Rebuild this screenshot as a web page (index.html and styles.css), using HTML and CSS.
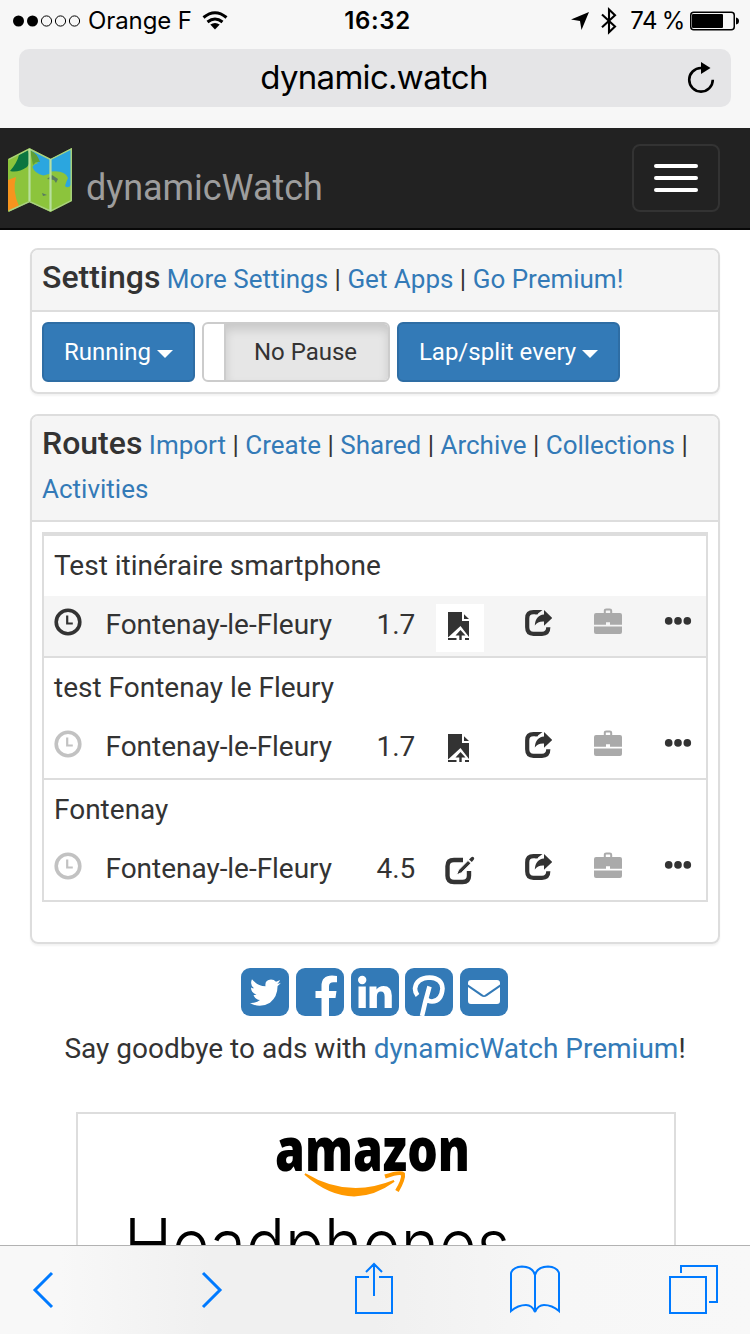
FILE: index.html
```
<!DOCTYPE html>
<html lang="en">
<head>
    <meta charset="UTF-8">
    <meta name="viewport" content="width=device-width, initial-scale=1.0">
    <title>dynamicWatch</title>
    <link rel="stylesheet" href="styles.css">
</head>
<body>
    <!-- icons used more than once -->
    <svg class="sprite">
        <symbol id="clock" viewBox="0 0 28 28">
            <circle cx="14" cy="14" r="11.800" fill="none" stroke="currentColor" stroke-width="3.600"/>
            <path d="M13.200 7.500v8h5.600" fill="none" stroke="currentColor" stroke-width="2.200"/>
        </symbol>
        <symbol id="share" viewBox="0 0 28 28">
            <path d="M14 4.200H9.500Q3.200 4.200 3.200 10.400V19.300Q3.200 25.800 9.500 25.800H18Q24.300 25.800 24.300 19.300" fill="none" stroke="currentColor" stroke-width="4.200"/>
            <path d="M12.500 2.100h6l-5.500 4.200h-2z"/>
            <path d="M20 2l8.300 8-8.300 7.700v-4.200c-4.500-.2-7 .8-9.200 4 .4-6.500 3.500-10.500 9.200-11z"/>
        </symbol>
        <symbol id="briefcase" viewBox="0 0 28 28">
            <path d="M10.800 6V2.800q0-1.400 1.400-1.400h3.600q1.400 0 1.400 1.400V6" fill="none" stroke="currentColor" stroke-width="2"/>
            <path d="M2 5h24q2 0 2 2v9.800H16v-2.500h-4v2.500H0V7q0-2 2-2z"/>
            <path d="M0 18.600h28v5.400q0 2-2 2H2q-2 0-2-2z"/>
        </symbol>
        <symbol id="dots" viewBox="0 0 28 28">
            <circle cx="4.700" cy="12.900" r="3.800"/>
            <circle cx="14" cy="12.900" r="3.800"/>
            <circle cx="23.300" cy="12.900" r="3.800"/>
        </symbol>
        <symbol id="map-file" viewBox="0 0 48 48">
            <path d="M12 8h14v9h7v16L24.500 22 12 33.500z"/>
            <path d="M28 10.200l5 4.800h-5z"/>
            <path d="M12 34h8.500v2H12zM29 34h4v2h-4z"/>
            <path d="M24.500 26l5 5.500h-3.800V36h-2.400v-4.500h-3.800z"/>
        </symbol>
    </svg>

    <header class="browser-top">
        <div class="status-bar">
            <div class="carrier">
                <svg width="68" height="12" viewBox="0 0 68 12">
                    <circle cx="5.500" cy="6" r="5.500"/>
                    <circle cx="19.500" cy="6" r="5.500"/>
                    <g fill="none" stroke="#000">
                        <circle cx="33.500" cy="6" r="5.100"/>
                        <circle cx="47.500" cy="6" r="5.100"/>
                        <circle cx="61.500" cy="6" r="5.100"/>
                    </g>
                </svg>
                <span class="carrier-name">Orange F</span>
                <svg class="wifi" width="26" height="19" viewBox="0 0 26 19">
                    <g fill="none" stroke="#000" stroke-width="3">
                        <path d="M1.500 6.500q11.500-9.500 23 0"/>
                        <path d="M5.500 11q7.500-6 15 0"/>
                    </g>
                    <path d="M8.300 13.600q4.700-3.400 9.400 0L13 18.500z"/>
                </svg>
            </div>
            <div class="time">16:32</div>
            <div class="indicators">
                <svg width="18" height="18" viewBox="0 0 18 18"><path d="M18 0L10.500 18 9 9 0 7.500z"/></svg>
                <svg class="bluetooth" width="16" height="28" viewBox="0 0 16 28">
                    <path d="M1 7.500l13 12-6 5.700V2.500l6 5.700-13 12" fill="none" stroke="#000" stroke-width="2.100"/>
                </svg>
                <span class="percent">74 %</span>
                <svg width="49" height="20" viewBox="0 0 49 20">
                    <rect x=".75" y="1.250" width="43.500" height="17.500" rx="3" fill="none" stroke="#000" stroke-width="1.500"/>
                    <rect x="2" y="3" width="31" height="14" rx="1"/>
                    <path d="M46 6.500q3 .5 3 3.500t-3 3.500z"/>
                </svg>
            </div>
        </div>
        <div class="address-bar">
            <span class="url">dynamic.watch</span>
            <svg class="reload" width="28" height="32" viewBox="0 0 28 32">
                <path d="M14.500 6H14A11.800 11.800 0 1 0 25.800 17.800" fill="none" stroke="#000" stroke-width="2.600"/>
                <path d="M14 0l9.500 6L14 12z"/>
            </svg>
        </div>
    </header>

    <nav class="navbar">
        <a class="brand" href="#">
            <svg width="64" height="64" viewBox="0 0 64 64">
                <path d="M0 11L21.500 0 42.500 11 64 0v53L42.500 64 21.500 54 0 64z" fill="#8cc43c"/>
                <path d="M22 1l20.500 11v13.500l-7 2q-9-2-11-8.500 1-3 6-4-4-1.500-4-5z" fill="#2ba6df"/>
                <path d="M43 11L63 1v36q-3 4-6 1 1-4 3-8-3-8-17-6.500z" fill="#2ba6df"/>
                <path d="M2 23Q9 15 11 7l9-5q4 12-1 17-9 6-17 4z" fill="#0b7540"/>
                <path d="M22 2q7 3 10 12-4-1-7 3z" fill="#5f9f35"/>
                <path d="M0 32l8-3q-4 14 3 29L0 63z" fill="#f7941e"/>
                <path d="M39 31l5-4 6 4-2 4-2-3zM34 45l5 2-4 1z" fill="#597b60"/>
                <path d="M.8 11.500L21.500 1 42.500 11.500 63.200 1v51.500L42.500 63 21.500 53.500.8 63" fill="none" stroke="#a9d080" stroke-width="1.400"/>
                <path d="M21.500 1v52M42.500 11v52" stroke="#b8dfa0" stroke-width="2.200"/>
            </svg>
            <span>dynamicWatch</span>
        </a>
        <button class="menu-toggle" aria-label="Menu">
            <i></i>
            <i></i>
            <i></i>
        </button>
    </nav>

    <main class="content">
        <section class="panel">
            <div class="panel-heading">
                <h2>Settings</h2>
                <a href="#">More Settings</a> |
                <a href="#">Get Apps</a> |
                <a href="#">Go Premium!</a>
            </div>
            <div class="panel-body buttons">
                <button class="btn btn-running">Running <span class="caret"></span></button>
                <div class="switch"><span>No Pause</span></div>
                <button class="btn btn-lap">Lap/split every <span class="caret"></span></button>
            </div>
        </section>

        <section class="panel routes">
            <div class="panel-heading">
                <h2>Routes</h2>
                <a href="#">Import</a> |
                <a href="#">Create</a> |
                <a href="#">Shared</a> |
                <a href="#">Archive</a> |
                <a href="#">Collections</a> |
                <a href="#">Activities</a>
            </div>
            <div class="panel-body">
                <div class="route-list">
                    <div class="route">
                        <div class="route-title">Test itinéraire smartphone</div>
                        <div class="route-row active">
                            <svg class="icon"><use href="#clock"/></svg>
                            <span>Fontenay-le-Fleury</span>
                            <span>1.7</span>
                            <svg class="icon-map"><use href="#map-file"/></svg>
                            <svg class="icon"><use href="#share"/></svg>
                            <svg class="icon muted"><use href="#briefcase"/></svg>
                            <svg class="icon"><use href="#dots"/></svg>
                        </div>
                    </div>
                    <div class="route">
                        <div class="route-title">test Fontenay le Fleury</div>
                        <div class="route-row">
                            <svg class="icon faded"><use href="#clock"/></svg>
                            <span>Fontenay-le-Fleury</span>
                            <span>1.7</span>
                            <svg class="icon-map"><use href="#map-file"/></svg>
                            <svg class="icon"><use href="#share"/></svg>
                            <svg class="icon muted"><use href="#briefcase"/></svg>
                            <svg class="icon"><use href="#dots"/></svg>
                        </div>
                    </div>
                    <div class="route">
                        <div class="route-title">Fontenay</div>
                        <div class="route-row">
                            <svg class="icon faded"><use href="#clock"/></svg>
                            <span>Fontenay-le-Fleury</span>
                            <span>4.5</span>
                            <svg class="icon-map" viewBox="0 0 48 48">
                                <path d="M27 12H18Q11.500 12 11.500 18.200V27.800Q11.500 34 18 34H26.500Q33 34 33 27.800V23" fill="none" stroke="currentColor" stroke-width="4.400"/>
                                <path d="M20.500 27l2-5 9.500-9.500 3 2.800-9.500 9.400z" stroke="#fff" stroke-width="1"/>
                                <path d="M33 11.500l2.300-2.200q1.300-1 2.400 0t0 2.500L35.800 14z"/>
                            </svg>
                            <svg class="icon"><use href="#share"/></svg>
                            <svg class="icon muted"><use href="#briefcase"/></svg>
                            <svg class="icon"><use href="#dots"/></svg>
                        </div>
                    </div>
                </div>
            </div>
        </section>

        <div class="social">
            <svg viewBox="0 0 48 48">
                <path d="M9 35q6 .4 10-3-5-.6-6.500-5 2 .2 3-.4-5.500-2-5.500-7.200 1.500.9 3 .9-4.500-3.600-2-9Q16.500 18 24.500 18.300 23.500 12 30 11.500q3 0 5 2.200 2-.4 4-1.600-.6 2.300-2.700 3.700 1.700-.1 3.500-1-1.300 2-3.200 3.300Q36.500 29 29 34.700 19 40.800 9 35z"/>
            </svg>
            <svg viewBox="0 0 48 48">
                <path d="M25.500 48V30h-6v-7h6v-5q0-10.500 10.500-10.500 2.500 0 5 .4v6.300h-3.500q-4.500 0-4.500 4V23h7.500l-1 7H33v18z"/>
            </svg>
            <svg viewBox="0 0 48 48">
                <circle cx="11.200" cy="12" r="4.200"/>
                <path d="M7.500 18.500h7.300V40H7.500zM18.500 18.500h7v3q2.300-3.600 7-3.600 8.300 0 8.300 9.600V40h-7.200V28.500q0-5-3.700-5-4 0-4 5V40h-7.400z"/>
            </svg>
            <svg viewBox="0 0 48 48">
                <path d="M12.500 27.500Q10 24.500 10 20.500 11.500 9.800 24.500 9.500 37 10 37.500 20.500 36.500 33 27 33.500q-4 0-5.800-3M24.500 18.500Q20 34 17 48" fill="none" stroke="#fff" stroke-width="4.600"/>
            </svg>
            <svg viewBox="0 0 48 48">
                <path d="M8 15q0-3 3-3h26q3 0 3 3v1.500L24 27.500 8 16.500z"/>
                <path d="M8 19l13 9q3 2 6 0l13-9v14q0 3-3 3H11q-3 0-3-3z"/>
            </svg>
        </div>
        <p class="premium">Say goodbye to ads with <a href="#">dynamicWatch Premium</a>!</p>

        <div class="ad">
            <svg width="596" height="180" viewBox="0 0 596 180">
                <text class="ad-logo" x="197" y="57" textLength="195" lengthAdjust="spacingAndGlyphs">amazon</text>
                <path d="M227 60Q270 86 316 67q-44 32-89-7z" fill="#ff9900" stroke="#ff9900" stroke-width="2"/>
                <path d="M307 62.500q15-5 18-2.500 1 5-6 17" fill="none" stroke="#ff9900" stroke-width="4"/>
                <text class="ad-title" x="46" y="156" textLength="386" lengthAdjust="spacingAndGlyphs">Headphones</text>
            </svg>
        </div>
    </main>

    <footer class="toolbar">
        <svg viewBox="0 0 52 52"><path d="M35 9L18 26l17 17"/></svg>
        <svg viewBox="0 0 52 52"><path d="M18 9l17 17-17 17"/></svg>
        <svg class="thin" viewBox="0 0 52 52"><path d="M22 13H9v36h36V13H32M27 32V0M19 8l8-8 8 8"/></svg>
        <svg class="thin" viewBox="0 0 52 52"><path d="M27 10v38Q24 41 18 41 10 41 3 47V9Q5 3 14 2.500 25 3 27 11 29 3 40 2.500q9 .5 11 6.500V47q-7-6-15-6-6 0-9 7"/></svg>
        <svg class="thin" viewBox="0 0 52 52"><path d="M2 13h36v36H2zM13 9V2h36v36h-8"/></svg>
    </footer>
</body>
</html>
```
FILE: styles.css
```
* {
    margin: 0;
    padding: 0;
    box-sizing: border-box;
}

body {
    height: 1334px;
    display: flex;
    flex-direction: column;
    overflow: hidden;
    font-family: Roboto, sans-serif;
    font-size: 28px;
    color: #333;
    background: #fff;
}

svg {
    display: block;
    fill: currentColor;
}

.sprite {
    position: absolute;
    width: 0;
    height: 0;
}

a {
    color: #337ab7;
    text-decoration: none;
}

/* browser chrome */
.browser-top {
    height: 128px;
    flex: none;
    background: #f7f7f7;
    color: #000;
    font-family: Inter, sans-serif;
}

.status-bar {
    height: 40px;
    padding: 1px 11px 0 13px;
    display: grid;
    grid-template-columns: 1fr auto 1fr;
    align-items: center;
    font-size: 24px;
}

.carrier,
.indicators {
    display: flex;
    align-items: center;
}

.indicators {
    justify-content: flex-end;
}

.carrier-name {
    margin-left: 7px;
    letter-spacing: -0.1px;
}

.wifi {
    margin-left: 10px;
}

.time {
    padding-left: 3px;
    font-weight: 600;
    letter-spacing: 0.6px;
}

.bluetooth {
    margin: 0 13px 0 12px;
}

.percent {
    margin-right: 5px;
    letter-spacing: -0.3px;
    word-spacing: -2px;
}

.address-bar {
    height: 58px;
    margin: 9px 19px 0;
    padding: 0 16px;
    border-radius: 10px;
    background: #e5e5e7;
    display: grid;
    grid-template-columns: 28px 1fr 28px;
    align-items: center;
}

.url {
    grid-column: 2;
    padding: 0 2px 2px 0;
    text-align: center;
    font-size: 33px;
    letter-spacing: -0.7px;
}

/* site header */
.navbar {
    height: 102px;
    flex: none;
    padding: 0 30px 0 8px;
    display: flex;
    justify-content: space-between;
    align-items: center;
    background: #222;
    border-bottom: 2px solid #080808;
}

.brand {
    display: flex;
    align-items: center;
    color: #9d9d9d;
    font-size: 36px;
    padding-top: 4px;
}

.brand span {
    margin: 16px 0 0 14px;
    line-height: 42px;
    letter-spacing: -0.05px;
}

.menu-toggle {
    width: 88px;
    height: 68px;
    border: 2px solid #333;
    border-radius: 8px;
    background: none;
    display: flex;
    flex-direction: column;
    align-items: center;
    justify-content: center;
    gap: 8px;
}

.menu-toggle i {
    width: 44px;
    height: 4px;
    border-radius: 2px;
    background: #fff;
}

.content {
    flex: 1;
    min-height: 0;
    overflow: hidden;
    padding: 18px 30px 0;
}

.panel {
    border: 2px solid #ddd;
    border-radius: 8px;
    margin-bottom: 20px;
    box-shadow: 0 2px 2px rgba(0, 0, 0, 0.05);
}

.panel-heading {
    padding: 7px 10px 9px;
    font-size: 26px;
    line-height: 44px;
    background: #f5f5f5;
    border-bottom: 2px solid #ddd;
    border-radius: 6px 6px 0 0;
}

.panel-heading h2 {
    display: inline;
    font-size: 32px;
    font-weight: 500;
    line-height: 1;
}

.panel-body {
    padding: 10px;
}

.buttons {
    display: flex;
    gap: 7px;
}

.btn {
    height: 60px;
    border: 2px solid #2e6da4;
    border-radius: 6px;
    background: #337ab7;
    color: #fff;
    font-family: inherit;
    font-size: 24px;
    display: flex;
    align-items: center;
    justify-content: center;
    gap: 6px;
}

.btn-running {
    width: 153px;
}

.btn-lap {
    width: 223px;
}

.caret {
    border: 8px solid transparent;
    border-top-color: #fff;
    border-bottom: 0;
    margin-top: 4px;
}

.switch {
    width: 188px;
    height: 60px;
    border: 2px solid #ccc;
    border-radius: 6px;
    font-size: 24px;
    background: #fff;
    padding-left: 20px;
}

.switch span {
    display: block;
    height: 56px;
    padding-right: 3px;
    line-height: 56px;
    text-align: center;
    background: #e6e6e6;
    border-left: 2px solid #ccc;
    border-radius: 0 4px 4px 0;
    box-shadow: inset 0 6px 10px rgba(0, 0, 0, 0.125);
}

.routes {
    height: 530px;
    margin-bottom: 24px;
}

.route-list {
    border: 2px solid #ddd;
    border-width: 4px 2px 0;
}

.route {
    border-bottom: 2px solid #ddd;
}

.route-title {
    padding: 10px;
    line-height: 40px;
}

.route-row {
    height: 60px;
    padding-left: 10px;
    display: grid;
    grid-template-columns: 51.5px 271px 59.5px 88px 70px 70px 28px;
}

.route-row span {
    line-height: 58px;
    letter-spacing: -0.03px;
}

.active {
    background: #f5f5f5;
}

.icon {
    width: 28px;
    height: 28px;
    margin-top: 12px;
    overflow: visible;
}

.icon-map {
    width: 48px;
    height: 48px;
    margin-top: 8px;
    background: #fff;
}

.muted {
    color: #aaa;
}

.faded {
    color: #c2c2c2;
}

.social {
    display: flex;
    justify-content: center;
    gap: 6.75px;
    padding-right: 1px;
}

.social svg {
    width: 48px;
    height: 48px;
    border-radius: 9px;
    background: #337ab7;
    fill: #fff;
}

.premium {
    margin-top: 13px;
    line-height: 40px;
    text-align: center;
}

.ad {
    width: 600px;
    height: 200px;
    margin: 43px 0 0 46px;
    border: 2px solid #ddd;
}

.ad-logo {
    font-family: "Open Sans", sans-serif;
    font-weight: 800;
    font-size: 61px;
    fill: #000;
}

.ad-title {
    font-family: Inter, sans-serif;
    font-weight: 300;
    font-size: 71px;
    fill: #000;
}

/* bottom bar */
.toolbar {
    height: 89px;
    flex: none;
    padding-left: 17px;
    display: grid;
    grid-template-columns: 168px 162px 161px 160px 52px;
    align-items: center;
    border-top: 1px solid #b2b2b2;
    background: linear-gradient(90deg, #f8f8f8 8%, #f0f0f0 28%, #f0f0f0 50%, #f7f7f7 75%, #f8f8f8);
}

.toolbar svg {
    width: 52px;
    height: 52px;
    overflow: visible;
    fill: none;
    stroke: #007aff;
    stroke-width: 3;
}

.toolbar .thin {
    stroke-width: 2;
}
```
